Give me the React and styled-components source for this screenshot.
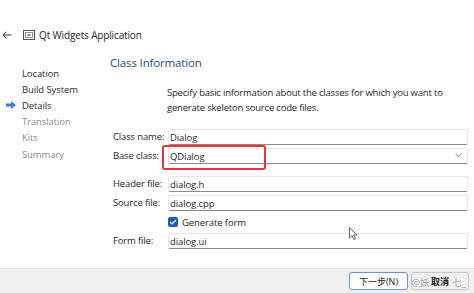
import React from 'react'
import styled, { createGlobalStyle } from 'styled-components'

const GlobalStyle = createGlobalStyle`
    html, body {
        margin: 0;
        padding: 0;
        background: #ffffff;
    }
    body {
        font-family: "Open Sans", "Noto Sans", "Noto Sans CJK SC", sans-serif;
        color: #1f1f1f;
    }
`

const Page = styled.div`
    width: 474px;
    height: 293px;
    display: flex;
    flex-direction: column;
    background: #ffffff;
    overflow: hidden;
    position: relative;
`
const Header = styled.div`
    margin-top: 28px;
    height: 14px;
    display: flex;
    align-items: center;
    font-size: 10px;
    letter-spacing: -0.15px;
    color: #1f1f1f;
`
const BackArrow = styled.span`
    width: 12px;
    margin-left: 2px;
    margin-right: 9px;
    display: flex;
    align-items: center;
`
const AppIcon = styled.span`
    width: 12px;
    margin-right: 4px;
    display: flex;
    align-items: center;
`
const Body = styled.div`
    flex: 1;
    min-height: 0;
    display: flex;
`
const Sidebar = styled.div`
    width: 110px;
    padding-top: 23px;
    display: flex;
    flex-direction: column;
`
const NavItem = styled.div`
    height: 16.2px;
    display: flex;
    align-items: center;
    padding-left: 22px;
    position: relative;
    font-size: 9.5px;
    letter-spacing: -0.1px;
    white-space: nowrap;
    color: ${p => (p.$muted ? '#8c8c8c' : '#2b2b2b')};
`
const NavMarker = styled.span`
    position: absolute;
    left: 6px;
    top: 4px;
    display: flex;
`
const Main = styled.div`
    flex: 1;
    padding-top: 13px;
    padding-right: 6px;
    display: flex;
    flex-direction: column;
`
const Title = styled.div`
    height: 16px;
    line-height: 16px;
    font-size: 11.5px;
    letter-spacing: -0.15px;
    color: #2c4e80;
`
const Description = styled.div`
    margin-top: 14px;
    margin-left: 57px;
    font-size: 9.5px;
    letter-spacing: -0.2px;
    line-height: 15px;
    white-space: nowrap;
    color: #1f1f1f;
`
const Form = styled.div`
    margin-top: 14px;
    margin-left: 3px;
    display: grid;
    grid-template-columns: 55px 1fr;
    row-gap: 3px;
    align-items: center;
`
const Label = styled.div`
    font-size: 9.5px;
    letter-spacing: -0.15px;
    white-space: nowrap;
    color: #1f1f1f;
    height: 16px;
    line-height: 16px;
`
const Field = styled.div`
    height: 14px;
    border: 1px solid #e6e6e6;
    border-bottom-color: #8a8a8a;
    border-radius: 2px;
    background: #ffffff;
    display: flex;
    align-items: center;
    padding-left: 1px;
    font-size: 9.5px;
    letter-spacing: -0.1px;
    color: #1f1f1f;
    position: relative;
`
const Chevron = styled.span`
    position: absolute;
    right: 5px;
    top: 4px;
    display: flex;
`
const Highlight = styled.span`
    position: absolute;
    left: -7px;
    top: -4px;
    width: 100px;
    height: 21px;
    border: 2px solid #e2343a;
    border-radius: 3px;
`
const Spacer = styled.div`
    height: ${p => p.$h}px;
    grid-column: 1 / span 2;
`
const CheckRow = styled.div`
    grid-column: 2;
    height: 16px;
    display: flex;
    align-items: center;
    font-size: 9.5px;
    letter-spacing: -0.1px;
    gap: 4px;
`
const CheckBox = styled.span`
    width: 10px;
    height: 10px;
    border-radius: 2px;
    background: #1d5fb2;
    display: flex;
    align-items: center;
    justify-content: center;
`
const Footer = styled.div`
    height: 24px;
    flex-shrink: 0;
    border-top: 1px solid #e2e2e2;
    background: #f0f0f0;
    display: flex;
    align-items: center;
    justify-content: flex-end;
    padding-right: 5px;
    gap: 3px;
    position: relative;
`
const Button = styled.div`
    width: ${p => p.$w}px;
    height: 16px;
    border: 1px solid ${p => (p.$primary ? '#6f93c4' : '#c9c9c9')};
    border-radius: 3px;
    background: ${p => (p.$primary ? '#fdfdfd' : 'transparent')};
    display: flex;
    align-items: center;
    justify-content: center;
    font-size: 9px;
    font-weight: ${p => (p.$primary ? 400 : 600)};
    color: #1f1f1f;
    position: relative;
    z-index: ${p => (p.$primary ? 2 : 0)};
`
const Watermark = styled.span`
    position: absolute;
    right: ${p => p.$right}px;
    top: 6px;
    font-size: 9.5px;
    color: rgba(150, 150, 150, 0.8);
    white-space: nowrap;
    z-index: 1;
`
const Cursor = styled.span`
    position: absolute;
    left: 349px;
    top: 227px;
    display: flex;
`

const App = () => {
    return (
        <>
            <GlobalStyle />
            <Page>
                <Header>
                    <BackArrow>
                        <svg width="10" height="8" viewBox="0 0 10 8">
                            <path d="M9.5 4H1M4.2 0.8L1 4l3.2 3.2" fill="none" stroke="#333" strokeWidth="1" />
                        </svg>
                    </BackArrow>
                    <AppIcon>
                        <svg width="12" height="10" viewBox="0 0 12 10">
                            <rect x="0.5" y="0.5" width="11" height="9" fill="none" stroke="#555" />
                            <rect x="2.5" y="2.5" width="7" height="5" fill="none" stroke="#777" strokeWidth="0.8" />
                            <rect x="4.5" y="4" width="3" height="2" fill="#888" />
                        </svg>
                    </AppIcon>
                    Qt Widgets Application
                </Header>
                <Body>
                    <Sidebar>
                        <NavItem>Location</NavItem>
                        <NavItem>Build System</NavItem>
                        <NavItem>
                            <NavMarker>
                                <svg width="10" height="8" viewBox="0 0 10 8">
                                    <path d="M0 2.5h5V0l5 4-5 4V5.5H0z" fill="#3b7fd4" />
                                </svg>
                            </NavMarker>
                            Details
                        </NavItem>
                        <NavItem $muted>Translation</NavItem>
                        <NavItem $muted>Kits</NavItem>
                        <NavItem $muted>Summary</NavItem>
                    </Sidebar>
                    <Main>
                        <Title>Class Information</Title>
                        <Description>
                            Specify basic information about the classes for which you want to<br />
                            generate skeleton source code files.
                        </Description>
                        <Form>
                            <Label>Class name:</Label>
                            <Field>Dialog</Field>
                            <Label>Base class:</Label>
                            <Field>
                                QDialog
                                <Highlight />
                                <Chevron>
                                    <svg width="7" height="5" viewBox="0 0 7 5">
                                        <path d="M0.5 0.8L3.5 3.8L6.5 0.8" fill="none" stroke="#666" strokeWidth="0.9" />
                                    </svg>
                                </Chevron>
                            </Field>
                            <Spacer $h={6} />
                            <Label>Header file:</Label>
                            <Field>dialog.h</Field>
                            <Label>Source file:</Label>
                            <Field>dialog.cpp</Field>
                            <CheckRow>
                                <CheckBox>
                                    <svg width="8" height="6" viewBox="0 0 8 6">
                                        <path d="M1 3l2 2 4-4" fill="none" stroke="#fff" strokeWidth="1.2" />
                                    </svg>
                                </CheckBox>
                                Generate form
                            </CheckRow>
                            <Label>Form file:</Label>
                            <Field>dialog.ui</Field>
                        </Form>
                    </Main>
                </Body>
                <Footer>
                    <Button $w={57} $primary>下一步(N)</Button>
                    <Button $w={56}>取消</Button>
                    <Watermark $right={42}>@妖.</Watermark>
                    <Watermark $right={8}>七_</Watermark>
                </Footer>
                <Cursor>
                    <svg width="9" height="13" viewBox="0 0 9 13">
                        <path d="M0.5 0.5v10.5l2.6-2.4 1.8 3.9 1.6-0.7-1.8-3.8H8z" fill="#fff" stroke="#444" strokeWidth="0.8" />
                    </svg>
                </Cursor>
            </Page>
        </>
    )
}

export default App
